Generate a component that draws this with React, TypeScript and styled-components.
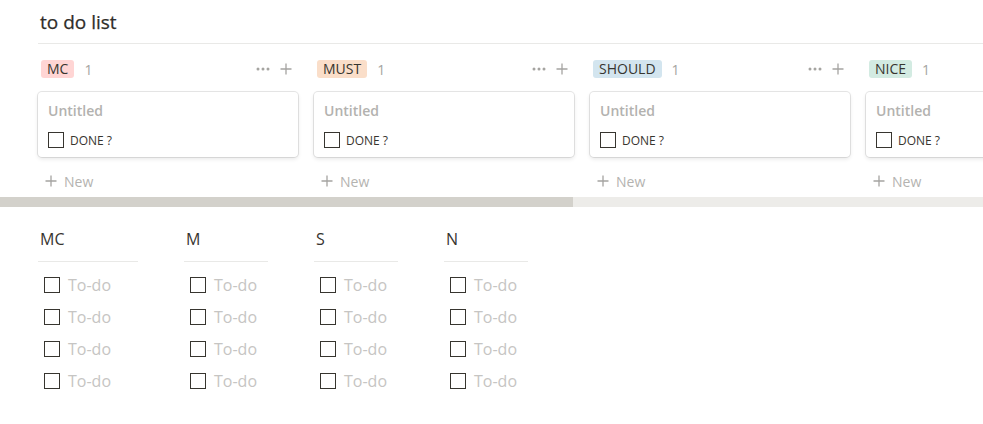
import React from 'react';
import styled, { createGlobalStyle } from 'styled-components';

const GlobalStyle = createGlobalStyle`
  html, body {
    margin: 0;
    padding: 0;
    background: #ffffff;
  }
  body {
    font-family: "Segoe UI", "Open Sans", "Noto Sans", sans-serif;
    color: #37352f;
    overflow: hidden;
  }
`;

interface Group {
  name: string;
  bg: string;
}

const groups: Group[] = [
  { name: 'MC', bg: '#ffd5d4' },
  { name: 'MUST', bg: '#fadec9' },
  { name: 'SHOULD', bg: '#d3e5ef' },
  { name: 'NICE', bg: '#d3ebe2' },
];

const lists = [
  { name: 'MC', width: 100 },
  { name: 'M', width: 84 },
  { name: 'S', width: 84 },
  { name: 'N', width: 84 },
];

const VIEW_WIDTH = 983;
const BOARD_WIDTH = 1686;

const Page = styled.div`
  width: 983px;
  height: 424px;
  overflow: hidden;
`;

const TitleBar = styled.div`
  margin-left: 38px;
  height: 44px;
  border-bottom: 1px solid #e9e9e7;
  display: flex;
  align-items: center;
  padding-left: 2px;
  box-sizing: border-box;
`;

const Title = styled.h2`
  margin: 0;
  font-size: 19px;
  font-weight: 500;
  line-height: 26px;
  color: #2f2e2a;
  -webkit-text-stroke: 0.25px #2f2e2a;
`;

const BoardScroller = styled.div`
  width: 983px;
  overflow: hidden;
`;

const BoardInner = styled.div`
  width: ${BOARD_WIDTH}px;
  box-sizing: border-box;
  padding: 9px 0 0 38px;
  display: flex;
  gap: 16px;
`;

const ScrollTrack = styled.div`
  height: 10px;
  background: #edece9;
  display: flex;
`;

const ScrollThumb = styled.div`
  height: 100%;
  background: #d3d1cb;
`;

const Column = styled.div`
  width: 260px;
  flex: none;
  display: flex;
  flex-direction: column;
`;

const ColumnHeader = styled.div`
  height: 32px;
  display: flex;
  align-items: center;
  padding: 0 6px 0 3px;
`;

const Tag = styled.span<{ $bg: string }>`
  background: ${p => p.$bg};
  border-radius: 3px;
  padding: 0 6px;
  height: 18px;
  line-height: 18px;
  font-size: 14px;
  color: #37352f;
`;

const Count = styled.span`
  margin-left: 10px;
  font-size: 14px;
  color: #a5a4a1;
`;

const Actions = styled.div`
  margin-left: auto;
  display: flex;
  align-items: center;
  gap: 10px;
`;

const Card = styled.div`
  margin-top: 7px;
  background: #ffffff;
  border-radius: 4px;
  box-shadow: rgba(15, 15, 15, 0.1) 0 0 0 1px, rgba(15, 15, 15, 0.1) 0 2px 4px;
  padding: 9px 10px 7px 10px;
  display: flex;
  flex-direction: column;
  gap: 9px;
`;

const CardTitle = styled.div`
  font-size: 14px;
  font-weight: 600;
  line-height: 20px;
  color: #b3b2af;
`;

const Property = styled.div`
  display: flex;
  align-items: center;
  height: 20px;
  gap: 6px;
  font-size: 12px;
  color: #37352f;
`;

const Box = styled.span`
  width: 16px;
  height: 16px;
  box-sizing: border-box;
  border: 1.6px solid #37352f;
  flex: none;
`;

const NewRow = styled.div`
  margin-top: 8px;
  height: 32px;
  display: flex;
  align-items: center;
  padding-left: 7px;
  gap: 7px;
  font-size: 14px;
  color: #b4b3b0;
`;

const Lists = styled.div`
  margin-top: 18px;
  padding-left: 38px;
  display: flex;
  gap: 46px;
`;

const ListColumn = styled.div<{ $w: number }>`
  width: ${p => p.$w}px;
  flex: none;
`;

const ListHeading = styled.div`
  padding-left: 2px;
  height: 28px;
  line-height: 28px;
  font-size: 16px;
  color: #37352f;
  border-bottom: 1px solid #e9e9e7;
  padding-bottom: 8px;
`;

const Todos = styled.div`
  margin-top: 7px;
  display: flex;
  flex-direction: column;
`;

const Todo = styled.div`
  height: 32px;
  display: flex;
  align-items: center;
  padding-left: 6px;
  gap: 8px;
  font-size: 16px;
  color: #c6c5c3;
`;

const Dots = () => (
  <svg width="14" height="4" viewBox="0 0 14 4">
    <circle cx="2" cy="2" r="1.5" fill="#a5a4a1" />
    <circle cx="7" cy="2" r="1.5" fill="#a5a4a1" />
    <circle cx="12" cy="2" r="1.5" fill="#a5a4a1" />
  </svg>
);

const Plus = ({ size = 12 }: { size?: number }) => (
  <svg width={size} height={size} viewBox="0 0 12 12">
    <path d="M6 0.5v11M0.5 6h11" stroke="#a5a4a1" strokeWidth="1.3" fill="none" />
  </svg>
);

export default function App() {
  const thumbWidth = Math.round((VIEW_WIDTH * VIEW_WIDTH) / BOARD_WIDTH);
  return (
    <Page>
      <GlobalStyle />
      <TitleBar>
        <Title>to do list</Title>
      </TitleBar>
      <BoardScroller>
        <BoardInner>
          {groups.map(g => (
            <Column key={g.name}>
              <ColumnHeader>
                <Tag $bg={g.bg}>{g.name}</Tag>
                <Count>1</Count>
                <Actions>
                  <Dots />
                  <Plus />
                </Actions>
              </ColumnHeader>
              <Card>
                <CardTitle>Untitled</CardTitle>
                <Property>
                  <Box />
                  DONE ?
                </Property>
              </Card>
              <NewRow>
                <Plus />
                New
              </NewRow>
            </Column>
          ))}
        </BoardInner>
      </BoardScroller>
      <ScrollTrack>
        <ScrollThumb style={{ width: thumbWidth }} />
      </ScrollTrack>
      <Lists>
        {lists.map(l => (
          <ListColumn key={l.name} $w={l.width}>
            <ListHeading>{l.name}</ListHeading>
            <Todos>
              {[0, 1, 2, 3].map(i => (
                <Todo key={i}>
                  <Box />
                  To-do
                </Todo>
              ))}
            </Todos>
          </ListColumn>
        ))}
      </Lists>
    </Page>
  );
}
